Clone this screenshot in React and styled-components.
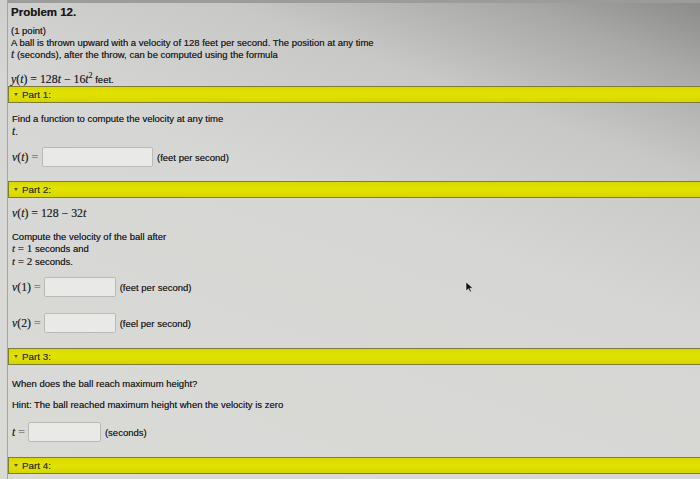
import styled, { createGlobalStyle } from "styled-components";

const Global = createGlobalStyle`
  html, body {
    margin: 0;
    padding: 0;
  }
  body {
    width: 700px;
    height: 479px;
    overflow: hidden;
    background: linear-gradient(200deg, #8a8a88 0%, #a9a9a7 10%, #c8c8c6 24%, #d6d6d4 45%, #dadad7 100%);
    font-family: "Liberation Sans", Arial, sans-serif;
    color: #222;
    text-shadow: 0 0 0.4px rgba(0, 0, 0, 0.6);
  }
`;

const Wrap = styled.div`
  position: relative;
  margin-left: 7px;
  min-height: 479px;
  border-left: 1px solid #a4a4a2;
  box-shadow: inset 0 3px 0 #9c9c9a;
`;

const Title = styled.h1`
  margin: 0;
  padding: 5px 3px 0;
  font-size: 11.5px;
  line-height: 14px;
  font-weight: bold;
  color: #1a1a1a;
`;

const Intro = styled.div`
  padding: 6px 3px 0;
  font-size: 9.5px;
  line-height: 12px;
`;

const Line = styled.div`
  margin-top: ${(p) => p.$mt || 0}px;
  height: ${(p) => p.$lh || 12}px;
  line-height: ${(p) => p.$lh || 12}px;
  white-space: nowrap;
`;

const Math = styled.span`
  font-family: "Liberation Serif", "Times New Roman", serif;
  font-size: ${(p) => p.$size || 11.8}px;
  line-height: 0;
  color: #2c2c2c;
  i {
    font-style: italic;
  }
  sup {
    font-size: 8px;
    vertical-align: 5px;
    line-height: 0;
  }
`;

const Eq = styled.span`
  color: #8a8a88;
  margin: 0 3px;
`;

const Bar = styled.div`
  box-sizing: border-box;
  height: 17px;
  display: flex;
  align-items: center;
  gap: 4px;
  padding-left: 5px;
  background: linear-gradient(#d9d900, #e2e200 50%, #d6d600);
  border: 1px solid #7c7c3c;
  border-right: none;
  font-size: 9.8px;
  color: #3a3a22;
`;

const Caret = styled.span`
  width: 0;
  height: 0;
  border-left: 2.5px solid transparent;
  border-right: 2.5px solid transparent;
  border-top: 3px solid #555;
`;

const Section = styled.div`
  padding: ${(p) => p.$pt}px 4px ${(p) => p.$pb}px;
  font-size: 9.5px;
  line-height: 13px;
`;

const Row = styled.div`
  display: flex;
  align-items: center;
  height: 20px;
  margin-top: ${(p) => p.$mt || 0}px;
`;

const Label = styled.span`
  display: inline-block;
  min-width: ${(p) => p.$w}px;
  white-space: nowrap;
`;

const Input = styled.div`
  box-sizing: border-box;
  width: ${(p) => p.$w}px;
  height: 20px;
  background: #e9e9e7;
  border: 1px solid #b9b9b6;
  border-radius: 2px;
`;

const Unit = styled.span`
  margin-left: 4px;
  font-size: 9.5px;
`;

const Cursor = styled.svg`
  position: absolute;
  left: 457px;
  top: 281px;
`;

const App = () => {
  return (
    <>
      <Global />
      <Wrap>
        <Title>Problem 12.</Title>
        <Intro>
          <Line>(1 point)</Line>
          <Line>A ball is thrown upward with a velocity of 128 feet per second. The position at any time</Line>
          <Line>
            <Math><i>t</i></Math> (seconds), after the throw, can be computed using the formula
          </Line>
          <Line $mt={13}>
            <Math>
              <i>y</i>(<i>t</i>) = 128<i>t</i> − 16<i>t</i>
              <sup>2</sup>
            </Math>{" "}
            feet.
          </Line>
        </Intro>

        <Bar>
          <Caret />
          Part 1:
        </Bar>
        <Section $pt={9} $pb={14}>
          <Line $lh={13}>Find a function to compute the velocity at any time</Line>
          <Line $lh={14}>
            <Math><i>t</i></Math>.
          </Line>
          <Row $mt={8}>
            <Label $w={30}>
              <Math>
                <i>v</i>(<i>t</i>)<Eq>=</Eq>
              </Math>
            </Label>
            <Input $w={111} />
            <Unit>(feet per second)</Unit>
          </Row>
        </Section>

        <Bar>
          <Caret />
          Part 2:
        </Bar>
        <Section $pt={9} $pb={15}>
          <Line $lh={14}>
            <Math>
              <i>v</i>(<i>t</i>) = 128 − 32<i>t</i>
            </Math>
          </Line>
          <Line $mt={10} $lh={12}>Compute the velocity of the ball after</Line>
          <Line $lh={12.5}>
            <Math $size={11}>
              <i>t</i> = 1
            </Math>{" "}
            seconds and
          </Line>
          <Line $lh={12.5}>
            <Math $size={11}>
              <i>t</i> = 2
            </Math>{" "}
            seconds.
          </Line>
          <Row $mt={9}>
            <Label $w={31}>
              <Math>
                <i>v</i>(1)<Eq>=</Eq>
              </Math>
            </Label>
            <Input $w={72} />
            <Unit>(feet per second)</Unit>
          </Row>
          <Row $mt={16}>
            <Label $w={31}>
              <Math>
                <i>v</i>(2)<Eq>=</Eq>
              </Math>
            </Label>
            <Input $w={72} />
            <Unit>(feel per second)</Unit>
          </Row>
        </Section>

        <Bar>
          <Caret />
          Part 3:
        </Bar>
        <Section $pt={12} $pb={15}>
          <Line $lh={13}>When does the ball reach maximum height?</Line>
          <Line $mt={8} $lh={13}>Hint: The ball reached maximum height when the velocity is zero</Line>
          <Row $mt={11}>
            <Label $w={15}>
              <Math>
                <i>t</i>
                <Eq>=</Eq>
              </Math>
            </Label>
            <Input $w={73} />
            <Unit>(seconds)</Unit>
          </Row>
        </Section>

        <Bar>
          <Caret />
          Part 4:
        </Bar>

        <Cursor width="9" height="12" viewBox="0 0 9 12">
          <path d="M1 1 L1 10 L3.4 7.8 L5 11 L6.4 10.3 L4.9 7.2 L8 7.2 Z" fill="#111" stroke="#eee" strokeWidth="0.6" />
        </Cursor>
      </Wrap>
    </>
  );
};

export default App;
